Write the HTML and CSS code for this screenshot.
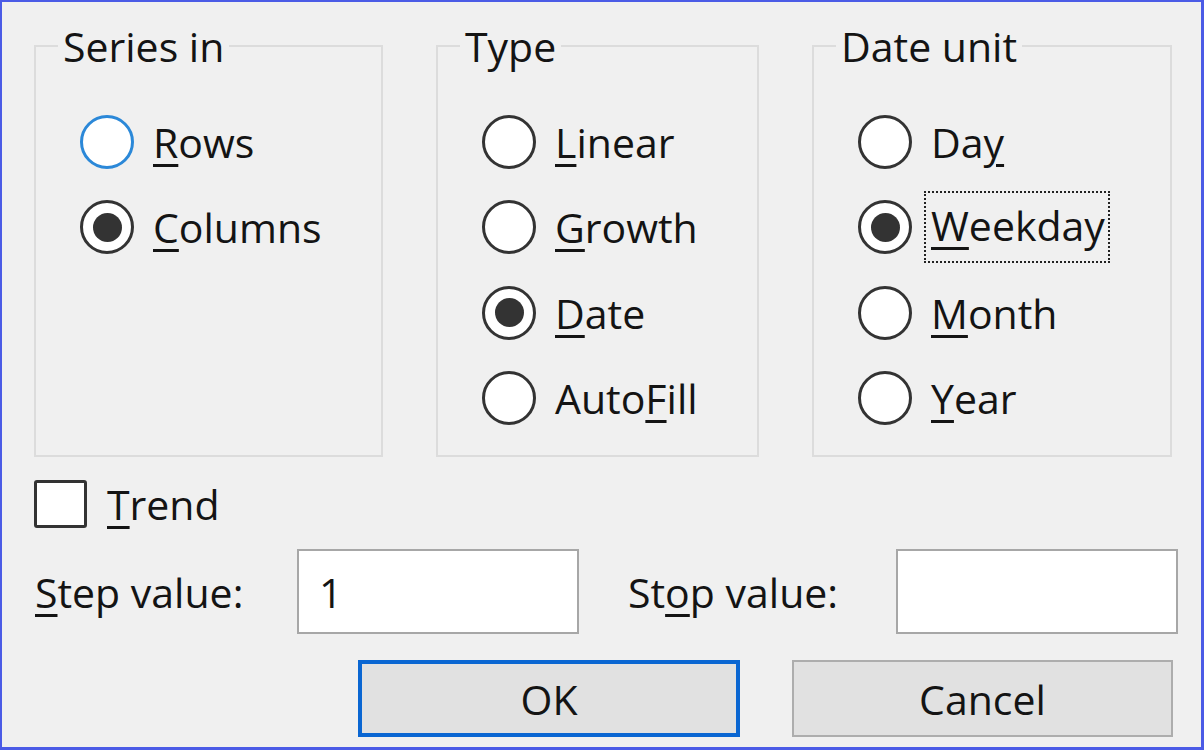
FILE: index.html
```html
<!DOCTYPE html>
<html>
<head>
<meta charset="utf-8">
<link rel="stylesheet" href="styles.css">
</head>
<body>
<div class="frame">
  <div class="groups">
    <fieldset class="group g1">
      <legend>Series in</legend>
      <div class="opts">
        <div class="opt"><span class="radio hover"></span><span class="lbl"><u>R</u>ows</span></div>
        <div class="opt"><span class="radio on"></span><span class="lbl"><u>C</u>olumns</span></div>
      </div>
    </fieldset>
    <fieldset class="group g2">
      <legend>Type</legend>
      <div class="opts">
        <div class="opt"><span class="radio"></span><span class="lbl"><u>L</u>inear</span></div>
        <div class="opt"><span class="radio"></span><span class="lbl"><u>G</u>rowth</span></div>
        <div class="opt"><span class="radio on"></span><span class="lbl"><u>D</u>ate</span></div>
        <div class="opt"><span class="radio"></span><span class="lbl">Auto<u>F</u>ill</span></div>
      </div>
    </fieldset>
    <fieldset class="group g3">
      <legend>Date unit</legend>
      <div class="opts">
        <div class="opt"><span class="radio"></span><span class="lbl">Da<u>y</u></span></div>
        <div class="opt"><span class="radio on"></span><span class="lbl focus"><u>W</u>eekday</span></div>
        <div class="opt"><span class="radio"></span><span class="lbl"><u>M</u>onth</span></div>
        <div class="opt"><span class="radio"></span><span class="lbl"><u>Y</u>ear</span></div>
      </div>
    </fieldset>
  </div>
  <div class="trend">
    <span class="check"></span><span class="lbl"><u>T</u>rend</span>
  </div>
  <div class="values">
    <span class="vlabel step"><u>S</u>tep value:</span>
    <div class="field f1">1</div>
    <span class="vlabel stop">St<u>o</u>p value:</span>
    <div class="field f2"></div>
  </div>
  <div class="buttons">
    <div class="btn ok">OK</div>
    <div class="btn cancel">Cancel</div>
  </div>
</div>
</body>
</html>
```

FILE: styles.css
```css
* { box-sizing: border-box; }
html, body { margin: 0; padding: 0; }
body {
  width: 1204px;
  height: 750px;
  overflow: hidden;
  font-family: "Open Sans", "Noto Sans", sans-serif;
  font-size: 41px;
  color: #141414;
  background: #f0f0f0;
}
.frame {
  width: 1204px;
  height: 750px;
  border-style: solid;
  border-color: #4b5be6;
  border-width: 2px 3px 3px 2px;
  background: #f0f0f0;
  padding: 24px 0 0 32px;
}
u {
  text-decoration-thickness: 3px;
  text-underline-offset: 6px;
}
.groups {
  display: flex;
  gap: 53px;
}
.group {
  margin: 0;
  padding: 0 0 14px 0;
  border: 2px solid #dcdcdc;
  min-width: 0;
}
.g1 { width: 349px; }
.g2 { width: 323px; }
.g3 { width: 360px; }
.group legend {
  margin-left: 22px;
  padding: 0 5px;
  line-height: 40px;
  height: 40px;
}
.opts {
  display: flex;
  flex-direction: column;
  padding: 33px 0 0 44px;
}
.opt {
  display: flex;
  align-items: center;
  height: 85.5px;
}
.radio {
  width: 54px;
  height: 54px;
  border-radius: 50%;
  border: 3px solid #333;
  background: #fff;
  flex: none;
  display: flex;
  align-items: center;
  justify-content: center;
  margin-right: 19px;
}
.radio.hover { border-color: #2b88d8; }
.radio.on::after {
  content: "";
  width: 29px;
  height: 29px;
  border-radius: 50%;
  background: #333;
}
.lbl { white-space: nowrap; }
.focus {
  border: 2px dotted #222;
  padding: 4px 3px 8px 5px;
  margin-left: -7px;
}
.trend {
  display: flex;
  align-items: center;
  margin-top: 19px;
  height: 56px;
}
.check {
  width: 53px;
  height: 48px;
  border: 3px solid #333;
  border-radius: 3px;
  background: #fff;
  margin-right: 20px;
}
.values {
  display: flex;
  align-items: center;
  margin-top: 17px;
}
.vlabel { white-space: nowrap; }
.step { width: 263px; padding-left: 1px; }
.stop { width: 268px; }
.field {
  height: 85px;
  background: #fff;
  border: 2px solid #a7a7a7;
  padding-left: 20px;
  display: flex;
  align-items: center;
}
.f1 { width: 282px; margin-right: 49px; }
.f2 { width: 282px; }
.buttons {
  display: flex;
  gap: 52px;
  margin-top: 26px;
  padding-left: 324px;
}
.btn {
  height: 77px;
  background: #e1e1e1;
  display: flex;
  align-items: center;
  justify-content: center;
}
.ok {
  width: 382px;
  border: 4px solid #0a66d2;
}
.cancel {
  width: 381px;
  border: 2px solid #adadad;
}
```
